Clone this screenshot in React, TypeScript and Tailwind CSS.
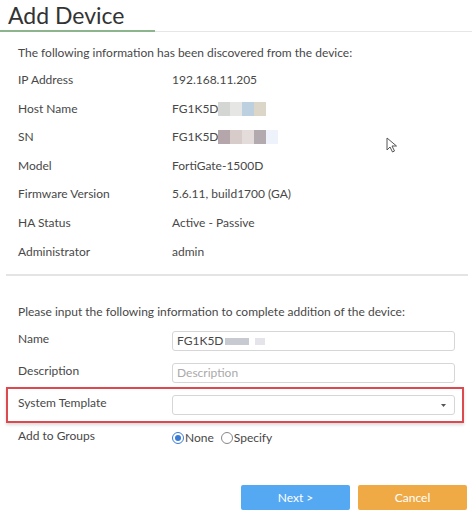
export default function App() {
  const rows: [string, React.ReactNode][] = [
    ["IP Address", "192.168.11.205"],
    ["Host Name", <Masked key="h" colors={["#d4d6d4", "#e6e6e4", "#bcd0e0", "#dcd6c8"]} />],
    ["SN", <Masked key="s" colors={["#b4a6aa", "#d8ccca", "#e4dcda", "#b2aaae", "#eef2fa"]} />],
    ["Model", "FortiGate-1500D"],
    ["Firmware Version", "5.6.11, build1700 (GA)"],
    ["HA Status", "Active - Passive"],
    ["Administrator", "admin"],
  ];

  return (
    <div className="w-[474px] h-[519px] bg-white text-[12px] text-[#484848] overflow-hidden relative" style={{ fontFamily: "Lato, 'Open Sans', sans-serif" }}>
      {/* Titre */}
      <div className="h-[30px] pl-[8px] flex items-end">
        <h1 className="text-[23px] leading-[30px] text-[#333] -mt-[5px]">Add Device</h1>
      </div>
      <div className="flex h-[2px] pr-[2px]">
        <div className="w-[155px] bg-[#8db58d]" />
        <div className="flex-1 bg-[#e6e6e6] h-[1px] mt-[1px]" />
      </div>

      <div className="pl-[18px] pt-[13px]">
        <p className="leading-[16px]">The following information has been discovered from the device:</p>
        <div className="mt-[10px]">
          {rows.map(([label, value]) => (
            <div key={label} className="flex h-[28.6px] items-start">
              <div className="w-[154px]">{label}</div>
              <div>{value}</div>
            </div>
          ))}
        </div>
      </div>

      <div className="mx-[6px] mt-[3px] h-[2px] bg-[#e4e4e4]" />

      <div className="pl-[18px] pt-[28px]">
        <p className="leading-[16px]">Please input the following information to complete addition of the device:</p>
        <div className="flex items-center h-[20px] mt-[11px]">
          <div className="w-[154px] -mt-[4px]">Name</div>
          <div className="w-[283px] h-[20px] border border-[#d6d6d6] rounded-[3px] flex items-center px-[4px]">
            FG1K5D
            <span className="inline-block w-[24px] h-[7px] bg-[#c8cad2] ml-[2px]" />
            <span className="inline-block w-[10px] h-[7px] bg-[#e4e4ea] ml-[6px]" />
          </div>
        </div>
        <div className="flex items-center h-[20px] mt-[12px]">
          <div className="w-[154px] -mt-[4px]">Description</div>
          <div className="w-[283px] h-[20px] border border-[#d6d6d6] rounded-[3px] flex items-center px-[4px] text-[#aaa]">
            Description
          </div>
        </div>
      </div>

      <div className="mx-[6px] mt-[4px] w-[458px] h-[36px] border-2 border-[#dc4a50] shadow-[0_2px_3px_rgba(0,0,0,0.15)] flex items-center pl-[10px]">
        <div className="w-[154px] -mt-[4px]">System Template</div>
        <div className="w-[283px] h-[20px] border border-[#d6d6d6] rounded-[3px] flex items-center justify-end pr-[8px]">
          <svg width="5" height="3" viewBox="0 0 5 3"><path d="M0 0h5L2.5 3z" fill="#555" /></svg>
        </div>
      </div>

      <div className="pl-[18px] flex items-center mt-[6px]">
        <div className="w-[154px] -mt-[4px]">Add to Groups</div>
        <label className="flex items-center">
          <span className="w-[12px] h-[12px] rounded-full border border-[#3a7bd5] flex items-center justify-center">
            <span className="w-[6px] h-[6px] rounded-full bg-[#3a7bd5]" />
          </span>
          <span className="ml-[1px]">None</span>
        </label>
        <label className="flex items-center ml-[7px]">
          <span className="w-[12px] h-[12px] rounded-full border border-[#888]" />
          <span className="ml-[1px]">Specify</span>
        </label>
      </div>

      <div className="flex justify-end gap-[8px] pr-[7px] mt-[38px]">
        <button className="w-[109px] h-[25px] rounded-[2px] bg-[#55a9f2] text-white text-[12px]">Next &gt;</button>
        <button className="w-[109px] h-[25px] rounded-[2px] bg-[#f0aa45] text-white text-[12px]">Cancel</button>
      </div>

      {/* curseur */}
      <svg className="absolute left-[386px] top-[137px]" width="11" height="16" viewBox="0 0 11 16">
        <path d="M1 1v12l3-3 2.5 5 2-1-2.5-5h4.5z" fill="#fff" stroke="#555" strokeWidth="1" strokeLinejoin="round" />
      </svg>
    </div>
  );
}

function Masked({ colors }: { colors: string[] }) {
  return (
    <span className="inline-flex items-center">
      FG1K5D
      {colors.map((c, i) => (
        <span key={i} className="inline-block w-[12px] h-[14px]" style={{ backgroundColor: c }} />
      ))}
    </span>
  );
}
